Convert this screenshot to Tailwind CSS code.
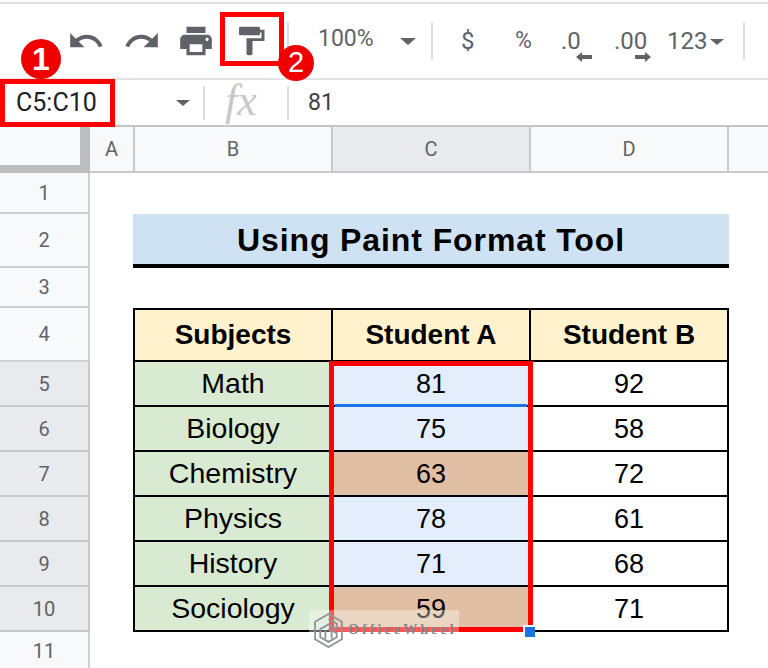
<!DOCTYPE html>
<html lang="en">
<head>
  <meta charset="UTF-8">
  <script src="https://cdn.jsdelivr.net/npm/@tailwindcss/browser@4"></script>
  <title>Using Paint Format Tool</title>
</head>
<body class="bg-white overflow-hidden">
  <div class="relative w-[768px] h-[668px] overflow-hidden bg-white font-['Roboto',sans-serif]">

    <!-- toolbar -->
    <div class="flex items-center h-[80px] mt-0 border-t-0 border-b-2 border-b-[#e4e4e6] text-[#5f6368] relative">
      <div class="absolute left-0 right-0 top-[2px] h-[2px] bg-[#dfdfe4]"></div>
      <svg class="absolute left-[67px] top-[22px] w-[38px] h-[38px]" viewBox="0 0 24 24" fill="#5f6368"><path d="M12.5 8c-2.65 0-5.05.99-6.9 2.6L2 7v9h9l-3.62-3.62c1.39-1.16 3.16-1.88 5.12-1.88 3.54 0 6.55 2.31 7.6 5.5l2.37-.78C21.08 11.03 17.15 8 12.5 8z"/></svg>
      <svg class="absolute left-[123px] top-[22px] w-[38px] h-[38px]" viewBox="0 0 24 24" fill="#5f6368"><path d="M18.4 10.6C16.55 8.99 14.15 8 11.5 8c-4.65 0-8.58 3.03-10 7.22L3.87 16c1.05-3.19 4.05-5.5 7.63-5.5 1.95 0 3.73.72 5.12 1.88L13 16h9V7l-3.6 3.6z"/></svg>
      <svg class="absolute left-[177px] top-[22px] w-[38px] h-[38px]" viewBox="0 0 24 24" fill="#5f6368"><path d="M19 8H5c-1.66 0-3 1.34-3 3v6h4v4h12v-4h4v-6c0-1.66-1.34-3-3-3zm-3 11H8v-5h8v5zm3-7c-.55 0-1-.45-1-1s.45-1 1-1 1 .45 1 1-.45 1-1 1zm-1-9H6v4h12V3z"/></svg>
      <svg class="absolute left-[233px] top-[24px] w-[36px] h-[34px]" viewBox="0 0 24 24" preserveAspectRatio="none" fill="#5f6368"><path d="M18 4V3c0-.55-.45-1-1-1H5c-.55 0-1 .45-1 1v4c0 .55.45 1 1 1h12c.55 0 1-.45 1-1V6h1v4H9v11c0 .55.45 1 1 1h2c.55 0 1-.45 1-1v-9h8V4h-3z"/></svg>
      <div class="absolute left-[287px] top-[22px] w-[2px] h-[38px] bg-[#dadce0]"></div>
      <span class="absolute left-[318px] top-[24px] text-[23px] leading-[30px]">100%</span>
      <div class="absolute left-[400px] top-[38px] w-0 h-0 border-x-[8px] border-t-[7px] border-x-transparent border-t-[#5f6368]"></div>
      <div class="absolute left-[431px] top-[22px] w-[2px] h-[38px] bg-[#dadce0]"></div>
      <span class="absolute left-[461px] top-[26px] text-[24px] leading-[30px]">$</span>
      <span class="absolute left-[515px] top-[26px] text-[23px] leading-[30px]">%</span>
      <span class="absolute left-[561px] top-[26px] text-[24px] leading-[30px]">.0</span>
      <svg class="absolute left-[576px] top-[52px] w-[16px] h-[10px]" viewBox="0 0 16 10" fill="#5f6368"><path d="M0 5 6 0v3h10v4H6v3z"/></svg>
      <span class="absolute left-[614px] top-[26px] text-[24px] leading-[30px]">.00</span>
      <svg class="absolute left-[635px] top-[52px] w-[16px] h-[10px]" viewBox="0 0 16 10" fill="#5f6368"><path d="M16 5 10 0v3H0v4h10v3z"/></svg>
      <span class="absolute left-[667px] top-[26px] text-[24px] leading-[30px]">123</span>
      <div class="absolute left-[710px] top-[39px] w-0 h-0 border-x-[7px] border-t-[6px] border-x-transparent border-t-[#5f6368]"></div>
      <div class="absolute left-[743px] top-[22px] w-[2px] h-[38px] bg-[#dadce0]"></div>
    </div>

    <!-- formula bar -->
    <div class="flex items-center h-[47px] border-b-2 border-[#c4c4c4] text-[#202124]">
      <div class="w-[203px] flex items-center justify-between pl-[16px] pr-[13px]">
        <span class="text-[25px] pt-[1px]">C5:C10</span>
        <div class="w-0 h-0 border-x-[7px] border-t-[6px] border-x-transparent border-t-[#5f6368]"></div>
      </div>
      <div class="w-[2px] h-[34px] bg-[#dadce0]"></div>
      <div class="w-[82px] pl-[20px] font-['Liberation_Serif',serif] italic text-[44px] leading-none text-[#c8c8c8] pb-[3px]">fx</div>
      <div class="w-[2px] h-[34px] bg-[#dadce0]"></div>
      <span class="pl-[19px] pt-[2px] text-[23px] text-[#3c4043]">81</span>
    </div>

    <!-- sheet -->
    <div class="grid grid-cols-[90px_45px_198px_198px_198px_39px] grid-rows-[46px_41px_54px_40px_54px_45px_45px_45px_45px_45px_45px_37px] text-[#5f6368] text-[20px]">
      <!-- column headers -->
      <div class="bg-[#f8f9fa] border-r-[10px] border-b-[8px] border-[#bdbdbd]"></div>
      <div class="bg-[#f8f9fa] border-r-2 border-b-2 border-[#c8c8c8] flex items-center justify-center">A</div>
      <div class="bg-[#f8f9fa] border-r-2 border-b-2 border-[#c8c8c8] flex items-center justify-center">B</div>
      <div class="bg-[#e8eaed] border-r-2 border-b-2 border-[#c8c8c8] flex items-center justify-center">C</div>
      <div class="bg-[#f8f9fa] border-r-2 border-b-2 border-[#c8c8c8] flex items-center justify-center">D</div>
      <div class="bg-[#f8f9fa] border-b-2 border-[#c8c8c8]"></div>

      <!-- row 1 -->
      <div class="bg-[#f8f9fa] border-r-2 border-b-2 border-[#d0d0d0] flex items-center justify-center">1</div>
      <div class="col-span-5"></div>

      <!-- row 2 -->
      <div class="bg-[#f8f9fa] border-r-2 border-b-2 border-[#d0d0d0] flex items-center justify-center">2</div>
      <div></div>
      <div class="col-span-3 -ml-[2px] bg-[#cfe2f3] border-b-4 border-black flex items-center justify-center font-['Liberation_Sans',sans-serif] font-bold text-black text-[32px] tracking-[0.9px] pt-[2px]">Using Paint Format Tool</div>
      <div></div>

      <!-- row 3 -->
      <div class="bg-[#f8f9fa] border-r-2 border-b-2 border-[#d0d0d0] flex items-center justify-center">3</div>
      <div class="col-span-5"></div>

      <!-- row 4 -->
      <div class="bg-[#f8f9fa] border-r-2 border-b-2 border-[#d0d0d0] flex items-center justify-center">4</div>
      <div></div>
      <div class="-ml-[2px] bg-[#fff2cc] border-2 border-black flex items-center justify-center font-['Liberation_Sans',sans-serif] font-bold text-black text-[28px]">Subjects</div>
      <div class="bg-[#fff2cc] border-y-2 border-r-2 border-black flex items-center justify-center font-['Liberation_Sans',sans-serif] font-bold text-black text-[28px]">Student A</div>
      <div class="bg-[#fff2cc] border-y-2 border-r-2 border-black flex items-center justify-center font-['Liberation_Sans',sans-serif] font-bold text-black text-[28px]">Student B</div>
      <div></div>

      <!-- row 5 -->
      <div class="bg-[#e8eaed] border-r-2 border-b-2 border-[#c8c8c8] flex items-center justify-center">5</div>
      <div></div>
      <div class="-ml-[2px] bg-[#d9ead3] border-x-2 border-b-2 border-black flex items-center justify-center font-['Liberation_Sans',sans-serif] text-black text-[28.5px]">Math</div>
      <div class="bg-[#e3edfb] border-r-2 border-b-2 border-black flex items-center justify-center pt-[1px] font-['Liberation_Sans',sans-serif] text-black text-[27px]">81</div>
      <div class="border-r-2 border-b-2 border-black flex items-center justify-center pt-[1px] font-['Liberation_Sans',sans-serif] text-black text-[27px]">92</div>
      <div></div>

      <!-- row 6 -->
      <div class="bg-[#e8eaed] border-r-2 border-b-2 border-[#c8c8c8] flex items-center justify-center">6</div>
      <div></div>
      <div class="-ml-[2px] bg-[#d9ead3] border-x-2 border-b-2 border-black flex items-center justify-center font-['Liberation_Sans',sans-serif] text-black text-[28.5px]">Biology</div>
      <div class="bg-[#e3edfb] border-r-2 border-b-2 border-black flex items-center justify-center pt-[1px] font-['Liberation_Sans',sans-serif] text-black text-[27px]">75</div>
      <div class="border-r-2 border-b-2 border-black flex items-center justify-center pt-[1px] font-['Liberation_Sans',sans-serif] text-black text-[27px]">58</div>
      <div></div>

      <!-- row 7 -->
      <div class="bg-[#e8eaed] border-r-2 border-b-2 border-[#c8c8c8] flex items-center justify-center">7</div>
      <div></div>
      <div class="-ml-[2px] bg-[#d9ead3] border-x-2 border-b-2 border-black flex items-center justify-center font-['Liberation_Sans',sans-serif] text-black text-[28.5px]">Chemistry</div>
      <div class="bg-[#e0bfa4] border-r-2 border-b-2 border-black flex items-center justify-center pt-[1px] font-['Liberation_Sans',sans-serif] text-black text-[27px]">63</div>
      <div class="border-r-2 border-b-2 border-black flex items-center justify-center pt-[1px] font-['Liberation_Sans',sans-serif] text-black text-[27px]">72</div>
      <div></div>

      <!-- row 8 -->
      <div class="bg-[#e8eaed] border-r-2 border-b-2 border-[#c8c8c8] flex items-center justify-center">8</div>
      <div></div>
      <div class="-ml-[2px] bg-[#d9ead3] border-x-2 border-b-2 border-black flex items-center justify-center font-['Liberation_Sans',sans-serif] text-black text-[28.5px]">Physics</div>
      <div class="bg-[#e3edfb] border-r-2 border-b-2 border-black flex items-center justify-center pt-[1px] font-['Liberation_Sans',sans-serif] text-black text-[27px]">78</div>
      <div class="border-r-2 border-b-2 border-black flex items-center justify-center pt-[1px] font-['Liberation_Sans',sans-serif] text-black text-[27px]">61</div>
      <div></div>

      <!-- row 9 -->
      <div class="bg-[#e8eaed] border-r-2 border-b-2 border-[#c8c8c8] flex items-center justify-center">9</div>
      <div></div>
      <div class="-ml-[2px] bg-[#d9ead3] border-x-2 border-b-2 border-black flex items-center justify-center font-['Liberation_Sans',sans-serif] text-black text-[28.5px]">History</div>
      <div class="bg-[#e3edfb] border-r-2 border-b-2 border-black flex items-center justify-center pt-[1px] font-['Liberation_Sans',sans-serif] text-black text-[27px]">71</div>
      <div class="border-r-2 border-b-2 border-black flex items-center justify-center pt-[1px] font-['Liberation_Sans',sans-serif] text-black text-[27px]">68</div>
      <div></div>

      <!-- row 10 -->
      <div class="bg-[#e8eaed] border-r-2 border-b-2 border-[#c8c8c8] flex items-center justify-center">10</div>
      <div></div>
      <div class="-ml-[2px] bg-[#d9ead3] border-x-2 border-b-2 border-black flex items-center justify-center font-['Liberation_Sans',sans-serif] text-black text-[28.5px]">Sociology</div>
      <div class="bg-[#e0bfa4] border-r-2 border-b-2 border-black flex items-center justify-center pt-[1px] font-['Liberation_Sans',sans-serif] text-black text-[27px]">59</div>
      <div class="border-r-2 border-b-2 border-black flex items-center justify-center pt-[1px] font-['Liberation_Sans',sans-serif] text-black text-[27px]">71</div>
      <div></div>

      <!-- row 11 -->
      <div class="bg-[#f8f9fa] border-r-2 border-[#d0d0d0] flex items-center justify-center">11</div>
      <div class="col-span-5"></div>
    </div>

    <!-- selection and callouts over the sheet -->
    <div class="absolute left-[335px] top-[404px] w-[192px] h-[3px] bg-[#1a73e8]"></div>
    <div class="absolute left-[329px] top-[361px] w-[204px] h-[271px] border-[5px] border-[#ff0000]"></div>
    <div class="absolute left-[523px] top-[625px] w-[12px] h-[12px] bg-[#1a73e8] border-l-2 border-t-2 border-white"></div>

    <div class="absolute left-0 top-[79px] w-[115px] h-[48px] border-[5px] border-[#ff0000]"></div>
    <div class="absolute left-[220px] top-[12px] w-[64px] h-[54px] border-[5px] border-[#ff0000]"></div>
    <div class="absolute left-[21px] top-[39px] w-[40px] h-[40px] rounded-full bg-[#ee0000] flex items-center justify-center text-white text-[32px] font-['Liberation_Sans',sans-serif] font-bold">1</div>
    <div class="absolute left-[278px] top-[45px] w-[36px] h-[36px] rounded-full bg-[#ee0000] flex items-center justify-center text-white text-[29px] font-['Liberation_Sans',sans-serif]">2</div>

    <!-- watermark -->
    <div class="absolute left-[309px] top-[610px] w-[150px] h-[28px] bg-white/35 flex items-start pl-[5px] gap-[5px]">
      <svg class="w-[29px] h-[35px] shrink-0 mt-[3px]" viewBox="0 0 28 34" fill="none" stroke="#8f9399" stroke-width="1.8"><path d="M14 1 27 8.5v17L14 33 1 25.5v-17z"/><path d="M14 6 22 10.5v5L14 11 6 15.5v8L14 28l8-4.5v-4L14 15"/><path d="M11 17v8M17 17v8"/></svg>
      <span class="font-['Liberation_Serif',serif] font-bold text-[14px] leading-[16px] tracking-[3.1px] text-[#85858a] mt-[12px]">OfficeWheel</span>
    </div>
  </div>
</body>
</html>
